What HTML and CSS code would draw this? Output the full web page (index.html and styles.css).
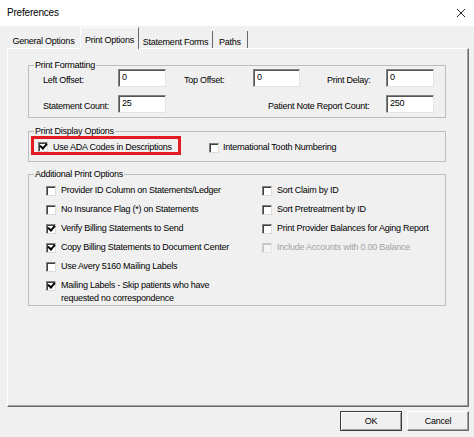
FILE: index.html
```html
<!DOCTYPE html>
<html>
<head>
<meta charset="utf-8">
<title>Preferences</title>
<link rel="stylesheet" href="styles.css">
</head>
<body>
<div class="window">
  <div class="titlebar">
    <span class="title">Preferences</span>
    <svg class="close" width="10" height="10" viewBox="0 0 10 10"><path d="M1 1 L9 9 M9 1 L1 9" stroke="#222" stroke-width="1" fill="none"/></svg>
  </div>
  <div class="client">
    <div class="tabs">
      <div class="tab tab-general">General Options</div>
      <div class="tab tab-active">Print Options</div>
      <div class="tab tab-statement">Statement Forms</div>
      <div class="tab tab-paths">Paths</div>
    </div>
    <div class="panel">
      <fieldset class="group group-format">
        <legend>Print Formatting</legend>
        <div class="format-grid">
          <span class="lbl">Left Offset:</span>
          <span class="input">0</span>
          <span class="spacer"></span>
          <span class="lbl">Top Offset:</span>
          <span class="input">0</span>
          <span class="spacer"></span>
          <span class="lbl">Print Delay:</span>
          <span class="input">0</span>
          <span class="lbl">Statement Count:</span>
          <span class="input">25</span>
          <span class="lbl lbl-wide">Patient Note Report Count:</span>
          <span class="input">250</span>
        </div>
      </fieldset>
      <fieldset class="group group-display">
        <legend>Print Display Options</legend>
        <div class="display-row">
          <span class="highlight">
            <span class="cb checked"></span><span class="txt">Use ADA Codes in Descriptions</span>
          </span>
          <span class="opt opt-intl"><span class="cb"></span><span class="txt">International Tooth Numbering</span></span>
        </div>
      </fieldset>
      <fieldset class="group group-additional">
        <legend>Additional Print Options</legend>
        <div class="cols">
          <div class="col col-left">
            <div class="item"><span class="cb"></span><span class="txt">Provider ID Column on Statements/Ledger</span></div>
            <div class="item"><span class="cb"></span><span class="txt">No Insurance Flag (*) on Statements</span></div>
            <div class="item"><span class="cb checked"></span><span class="txt">Verify Billing Statements to Send</span></div>
            <div class="item"><span class="cb checked"></span><span class="txt">Copy Billing Statements to Document Center</span></div>
            <div class="item"><span class="cb"></span><span class="txt">Use Avery 5160 Mailing Labels</span></div>
            <div class="item"><span class="cb checked"></span><span class="txt">Mailing Labels - Skip patients who have<br>requested no correspondence</span></div>
          </div>
          <div class="col col-right">
            <div class="item"><span class="cb"></span><span class="txt">Sort Claim by ID</span></div>
            <div class="item"><span class="cb"></span><span class="txt">Sort Pretreatment by ID</span></div>
            <div class="item"><span class="cb"></span><span class="txt">Print Provider Balances for Aging Report</span></div>
            <div class="item disabled"><span class="cb"></span><span class="txt">Include Accounts with 0.00 Balance</span></div>
          </div>
        </div>
      </fieldset>
    </div>
    <div class="buttons">
      <button class="btn btn-default">OK</button>
      <button class="btn">Cancel</button>
    </div>
  </div>
</div>
</body>
</html>
```
FILE: styles.css
```css
* { box-sizing: border-box; }
html, body { margin: 0; padding: 0; }
body {
  width: 474px;
  height: 437px;
  overflow: hidden;
  background: #f0f0f0;
  font-family: "Liberation Sans", Arial, sans-serif;
  font-size: 9px;
  letter-spacing: -0.25px;
  color: #000;
}
.window { width: 474px; height: 437px; background: #f0f0f0; }
.titlebar {
  height: 26px;
  background: #fff;
  display: flex;
  align-items: center;
  justify-content: space-between;
  padding: 0 7px 0 7px;
}
.title { font-size: 10px; letter-spacing: -0.2px; line-height: 14px; }
.close { display: block; margin-right: 1px; }

.client { padding: 0 5px 0 7px; }

.tabs {
  height: 22px;
  display: flex;
  align-items: flex-end;
  white-space: nowrap;
}
.tab {
  height: 18px;
  line-height: 12px;
  padding-top: 5px;
  text-align: center;
}
.tab-general { width: 73px; }
.tab-active {
  width: 59px;
  height: 22px;
  padding-top: 6px;
  margin-bottom: -1px;
  border-right: 1px solid #696969;
  border-left: 1px solid #fff;
  border-top: 1px solid #fff;
  background: #f0f0f0;
  position: relative;
  z-index: 1;
}
.tab-statement { width: 74px; border-right: 1px solid #696969; height: 17px; }
.tab-paths { width: 35px; border-right: 1px solid #696969; height: 17px; }

.panel {
  width: 462px;
  height: 359px;
  border-top: 1px solid #fff;
  border-left: 1px solid #fff;
  border-right: 1px solid #696969;
  border-bottom: 1px solid #696969;
  box-shadow: inset -1px -1px 0 #a0a0a0;
  padding-top: 10px;
}

.group {
  margin: 0 22px 0 20px;
  padding: 0;
  border: 1px solid #bdbdbd;
  min-width: 0;
}
.group legend {
  margin-left: 5px;
  padding: 0 1px;
  line-height: 12px;
  white-space: nowrap;
}

.format-grid {
  display: grid;
  grid-template-columns: 75px 48px 18px 69px 47px 27px 59px 48px;
  grid-auto-rows: 18px;
  row-gap: 8px;
  padding-left: 14px;
  margin-top: -2px;
  padding-bottom: 4px;
  white-space: nowrap;
}
.lbl { align-self: center; line-height: 12px; padding-top: 3px; }
.lbl-wide { grid-column: 3 / 8; padding-left: 102px; }
.input {
  background: #fff;
  border-top: 1px solid #828282;
  border-left: 1px solid #828282;
  border-right: 1px solid #e3e3e3;
  border-bottom: 1px solid #e3e3e3;
  box-shadow: inset 1px 1px 0 #555;
  padding: 1px 0 0 3px;
  line-height: 12px;
}

.group-display { margin-top: 7px; }
.display-row {
  display: flex;
  align-items: center;
  margin-top: -1px;
  padding-bottom: 6px;
  padding-left: 2px;
  white-space: nowrap;
}
.highlight {
  display: flex;
  align-items: center;
  width: 150px;
  height: 19px;
  border: 3px solid #e31b23;
  padding-left: 4px;
  padding-top: 3px;
}
.highlight .txt { margin-left: 5px; }
.opt { display: flex; align-items: center; padding-top: 4px; }
.opt-intl { margin-left: 28px; }
.opt .txt { margin-left: 4px; }

.cb {
  display: inline-block;
  flex: none;
  width: 10px;
  height: 10px;
  background: #fff;
  border-top: 1px solid #808080;
  border-left: 1px solid #808080;
  border-right: 1px solid #dcdcdc;
  border-bottom: 1px solid #dcdcdc;
  box-shadow: inset 1px 1px 0 #404040;
  position: relative;
}
.cb.checked::after {
  content: "";
  position: absolute;
  left: 1px;
  top: 0px;
  width: 5px;
  height: 3px;
  border-left: 2px solid #000;
  border-bottom: 2px solid #000;
  transform: rotate(-48deg);
}
.txt { line-height: 13px; }

.group-additional { margin-top: 6px; }
.cols { display: flex; padding-left: 17px; white-space: nowrap; padding-top: 1px; }
.col-left { width: 216px; }
.item {
  display: flex;
  align-items: flex-start;
  min-height: 19px;
  padding-top: 3px;
}
.item .cb { margin-top: 1.5px; }
.item .txt { margin-left: 5px; }
.item.disabled .txt { color: #a3a3a3; }
.item.disabled .cb {
  border-color: #c8c8c8 #e6e6e6 #e6e6e6 #c8c8c8;
  box-shadow: inset 1px 1px 0 #c8c8c8;
  background: #f4f4f4;
}

.buttons {
  display: flex;
  justify-content: flex-end;
  gap: 5px;
  margin-top: 4px;
  width: 462px;
}
.btn {
  width: 62px;
  height: 20px;
  padding: 0;
  font: inherit;
  letter-spacing: inherit;
  color: #000;
  background: #f0f0f0;
  border: 1px solid;
  border-color: #fff #696969 #696969 #fff;
  box-shadow: inset -1px -1px 0 #a0a0a0;
  line-height: 12px;
}
.btn-default {
  border: 1px solid #3c3c3c;
  box-shadow: inset 1px 1px 0 #fff, inset -1px -1px 0 #a0a0a0;
}
```
